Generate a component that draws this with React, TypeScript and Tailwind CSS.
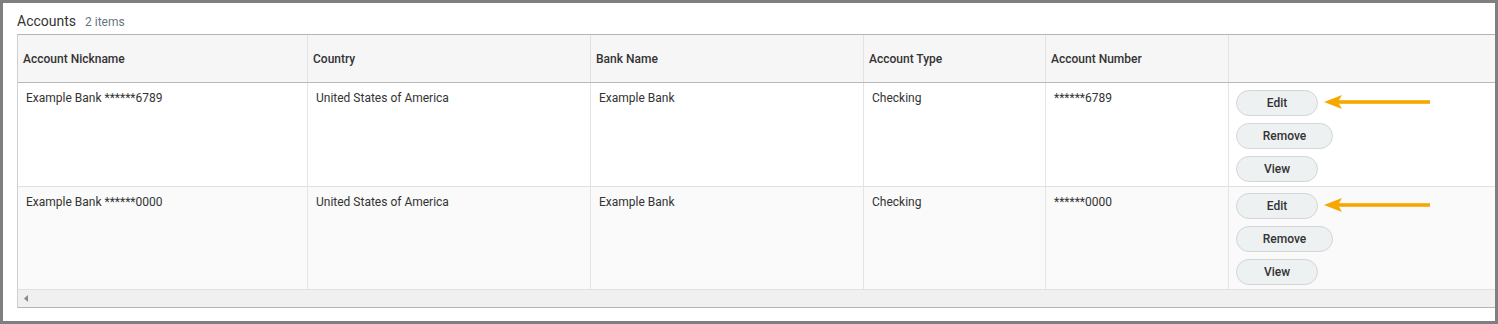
import { ReactNode } from 'react'

type Account = {
  nickname: string
  country: string
  bank: string
  type: string
  number: string
}

const accounts: Account[] = [
  {
    nickname: 'Example Bank ******6789',
    country: 'United States of America',
    bank: 'Example Bank',
    type: 'Checking',
    number: '******6789',
  },
  {
    nickname: 'Example Bank ******0000',
    country: 'United States of America',
    bank: 'Example Bank',
    type: 'Checking',
    number: '******0000',
  },
]

const headers = ['Account Nickname', 'Country', 'Bank Name', 'Account Type', 'Account Number', '']

const cols = 'grid grid-cols-[290px_283px_273px_182px_183px_320px]'

const Arrow = () => (
  <svg width="106" height="16" viewBox="0 0 106 16" className="ml-[6px] -mt-[3px]">
    <polygon points="0,8 18,1 14,8 18,15" fill="#f6a800" />
    <rect x="13" y="6.2" width="93" height="3.6" fill="#f6a800" />
  </svg>
)

const Btn = ({ children, wide, arrow }: { children: ReactNode; wide?: boolean; arrow?: boolean }) => (
  <div className="flex items-center">
    <button
      className={`${wide ? 'w-[97px]' : 'w-[82px]'} h-[26px] rounded-full border border-[#d2d6d9] bg-[#eef1f2] text-[12px] font-medium text-[#333]`}
    >
      {children}
    </button>
    {arrow && <Arrow />}
  </div>
)

export default function App() {
  return (
    <div
      className="w-[1498px] h-[324px] border-[3px] border-[#7f7f7f] bg-white overflow-hidden"
      style={{ fontFamily: 'Roboto, "Liberation Sans", sans-serif' }}
    >
      <div className="pl-[14px] pt-[9px]">
        {/* Title */}
        <div className="flex items-baseline gap-[9px] h-[18px] leading-[18px] mb-[4px]">
          <span className="text-[14px] text-[#333]">Accounts</span>
          <span className="text-[12px] text-[#6a7581]">2 items</span>
        </div>

        {/* Table */}
        <div className="border-l border-t border-b border-l-[#cfcfcf] border-t-[#b4b4b4] border-b-[#b4b4b4] overflow-hidden">
          <div className={`${cols} h-[48px] bg-[#f6f6f6] border-b border-[#b9b9b9]`}>
            {headers.map((h, i) => (
              <div
                key={i}
                className="flex items-center pl-[5px] border-r border-[#e2e2e2] text-[12px] font-medium text-[#333]"
              >
                {h}
              </div>
            ))}
          </div>

          {accounts.map((a, r) => (
            <div
              key={a.number}
              className={`${cols} ${r === 0 ? 'h-[104px] bg-white' : 'h-[103px] bg-[#fafafa]'} border-b border-[#e0e0e0]`}
            >
              {[a.nickname, a.country, a.bank, a.type, a.number].map((t, i) => (
                <div
                  key={i}
                  className="pl-[8px] pt-[7px] border-r border-[#e4e4e4] text-[12px] leading-[16px] text-[#333]"
                >
                  {t}
                </div>
              ))}
              <div className={`pl-[7px] ${r === 0 ? 'pt-[7px]' : 'pt-[6px]'} flex flex-col gap-[7px]`}>
                <Btn arrow>Edit</Btn>
                <Btn wide>Remove</Btn>
                <Btn>View</Btn>
              </div>
            </div>
          ))}

          {/* Horizontal scrollbar */}
          <div className="h-[17px] bg-[#f0f0f0] flex items-center pl-[6px]">
            <svg width="4" height="7" viewBox="0 0 4 7">
              <polygon points="4,0 4,7 0,3.5" fill="#8a8a8a" />
            </svg>
          </div>
        </div>
      </div>
    </div>
  )
}
